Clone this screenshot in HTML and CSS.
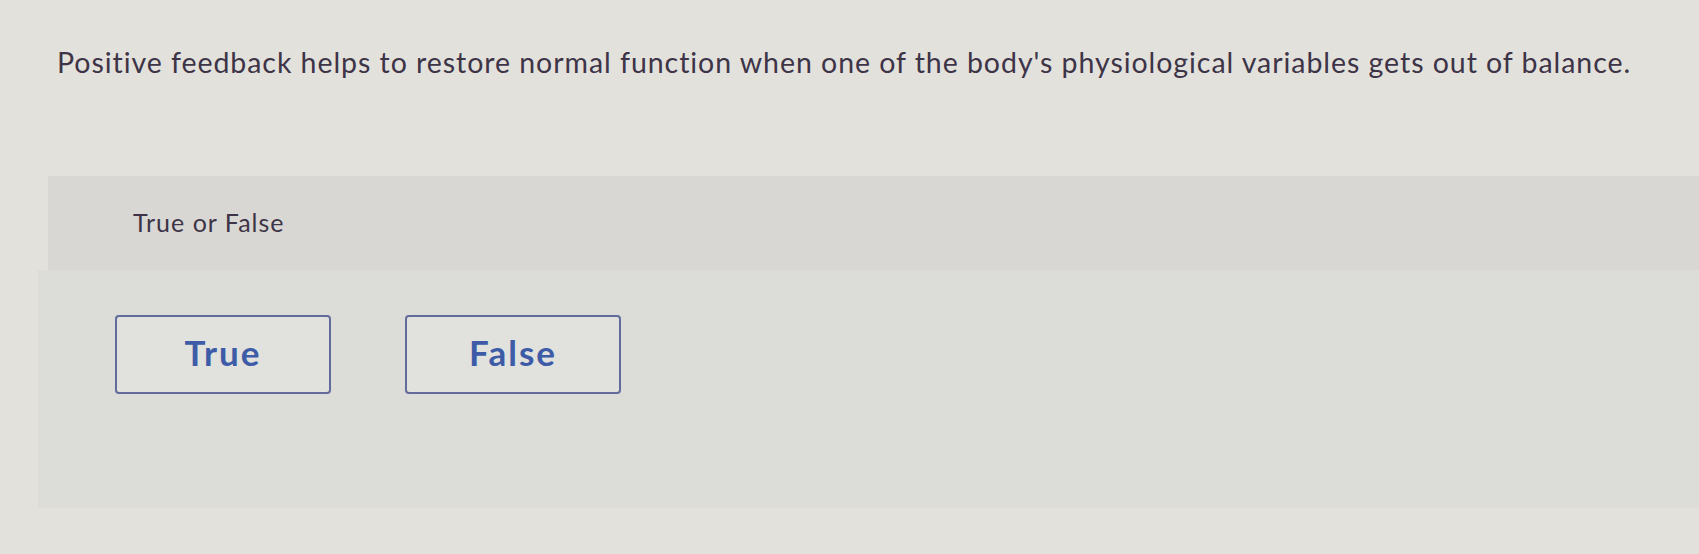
FILE: index.html
```html
<!DOCTYPE html>
<html lang="en">
<head>
<meta charset="utf-8">
<title>True or False</title>
<link rel="stylesheet" href="styles.css">
</head>
<body>
  <main class="page">
    <p class="prompt">Positive feedback helps to restore normal function when one of the body's physiological variables gets out of balance.</p>

    <section class="question-card">
      <header class="question-type">True or False</header>
      <div class="answers">
        <button class="choice" type="button">True</button>
        <button class="choice" type="button">False</button>
      </div>
    </section>
  </main>
</body>
</html>
```

FILE: styles.css
```css
html, body {
  margin: 0;
  padding: 0;
}

body {
  background: #e3e1dc;
  font-family: Lato, "Open Sans", "Liberation Sans", sans-serif;
  font-variant-ligatures: none;
  color: #3b3444;
  height: 554px;
  overflow: hidden;
}

.page {
  display: flex;
  flex-direction: column;
}

.prompt {
  margin: 45px 0 0 57px;
  font-size: 28.5px;
  line-height: 34px;
  font-weight: 400;
  letter-spacing: 0.95px;
  color: #3d3447;
  white-space: nowrap;
}

.question-card {
  margin: 97px 0 0 38px;
  display: flex;
  flex-direction: column;
}

.question-type {
  margin-left: 10px;
  padding: 32px 0 33px 85px;
  background: #d9d7d3;
  font-size: 25px;
  line-height: 29px;
  letter-spacing: 1px;
  color: #3d3447;
}

.answers {
  display: flex;
  gap: 74px;
  padding: 45px 0 114px 77px;
  background: #dcdcd9;
}

.choice {
  width: 216px;
  height: 79px;
  box-sizing: border-box;
  border: 2px solid #636a9c;
  border-radius: 4px;
  background: #e1e1de;
  font-family: Lato, "Open Sans", "Liberation Sans", sans-serif;
  font-size: 35px;
  font-weight: 700;
  color: #3d5ba6;
  letter-spacing: 2px;
  padding: 0 0 6px;
  cursor: pointer;
}
```
